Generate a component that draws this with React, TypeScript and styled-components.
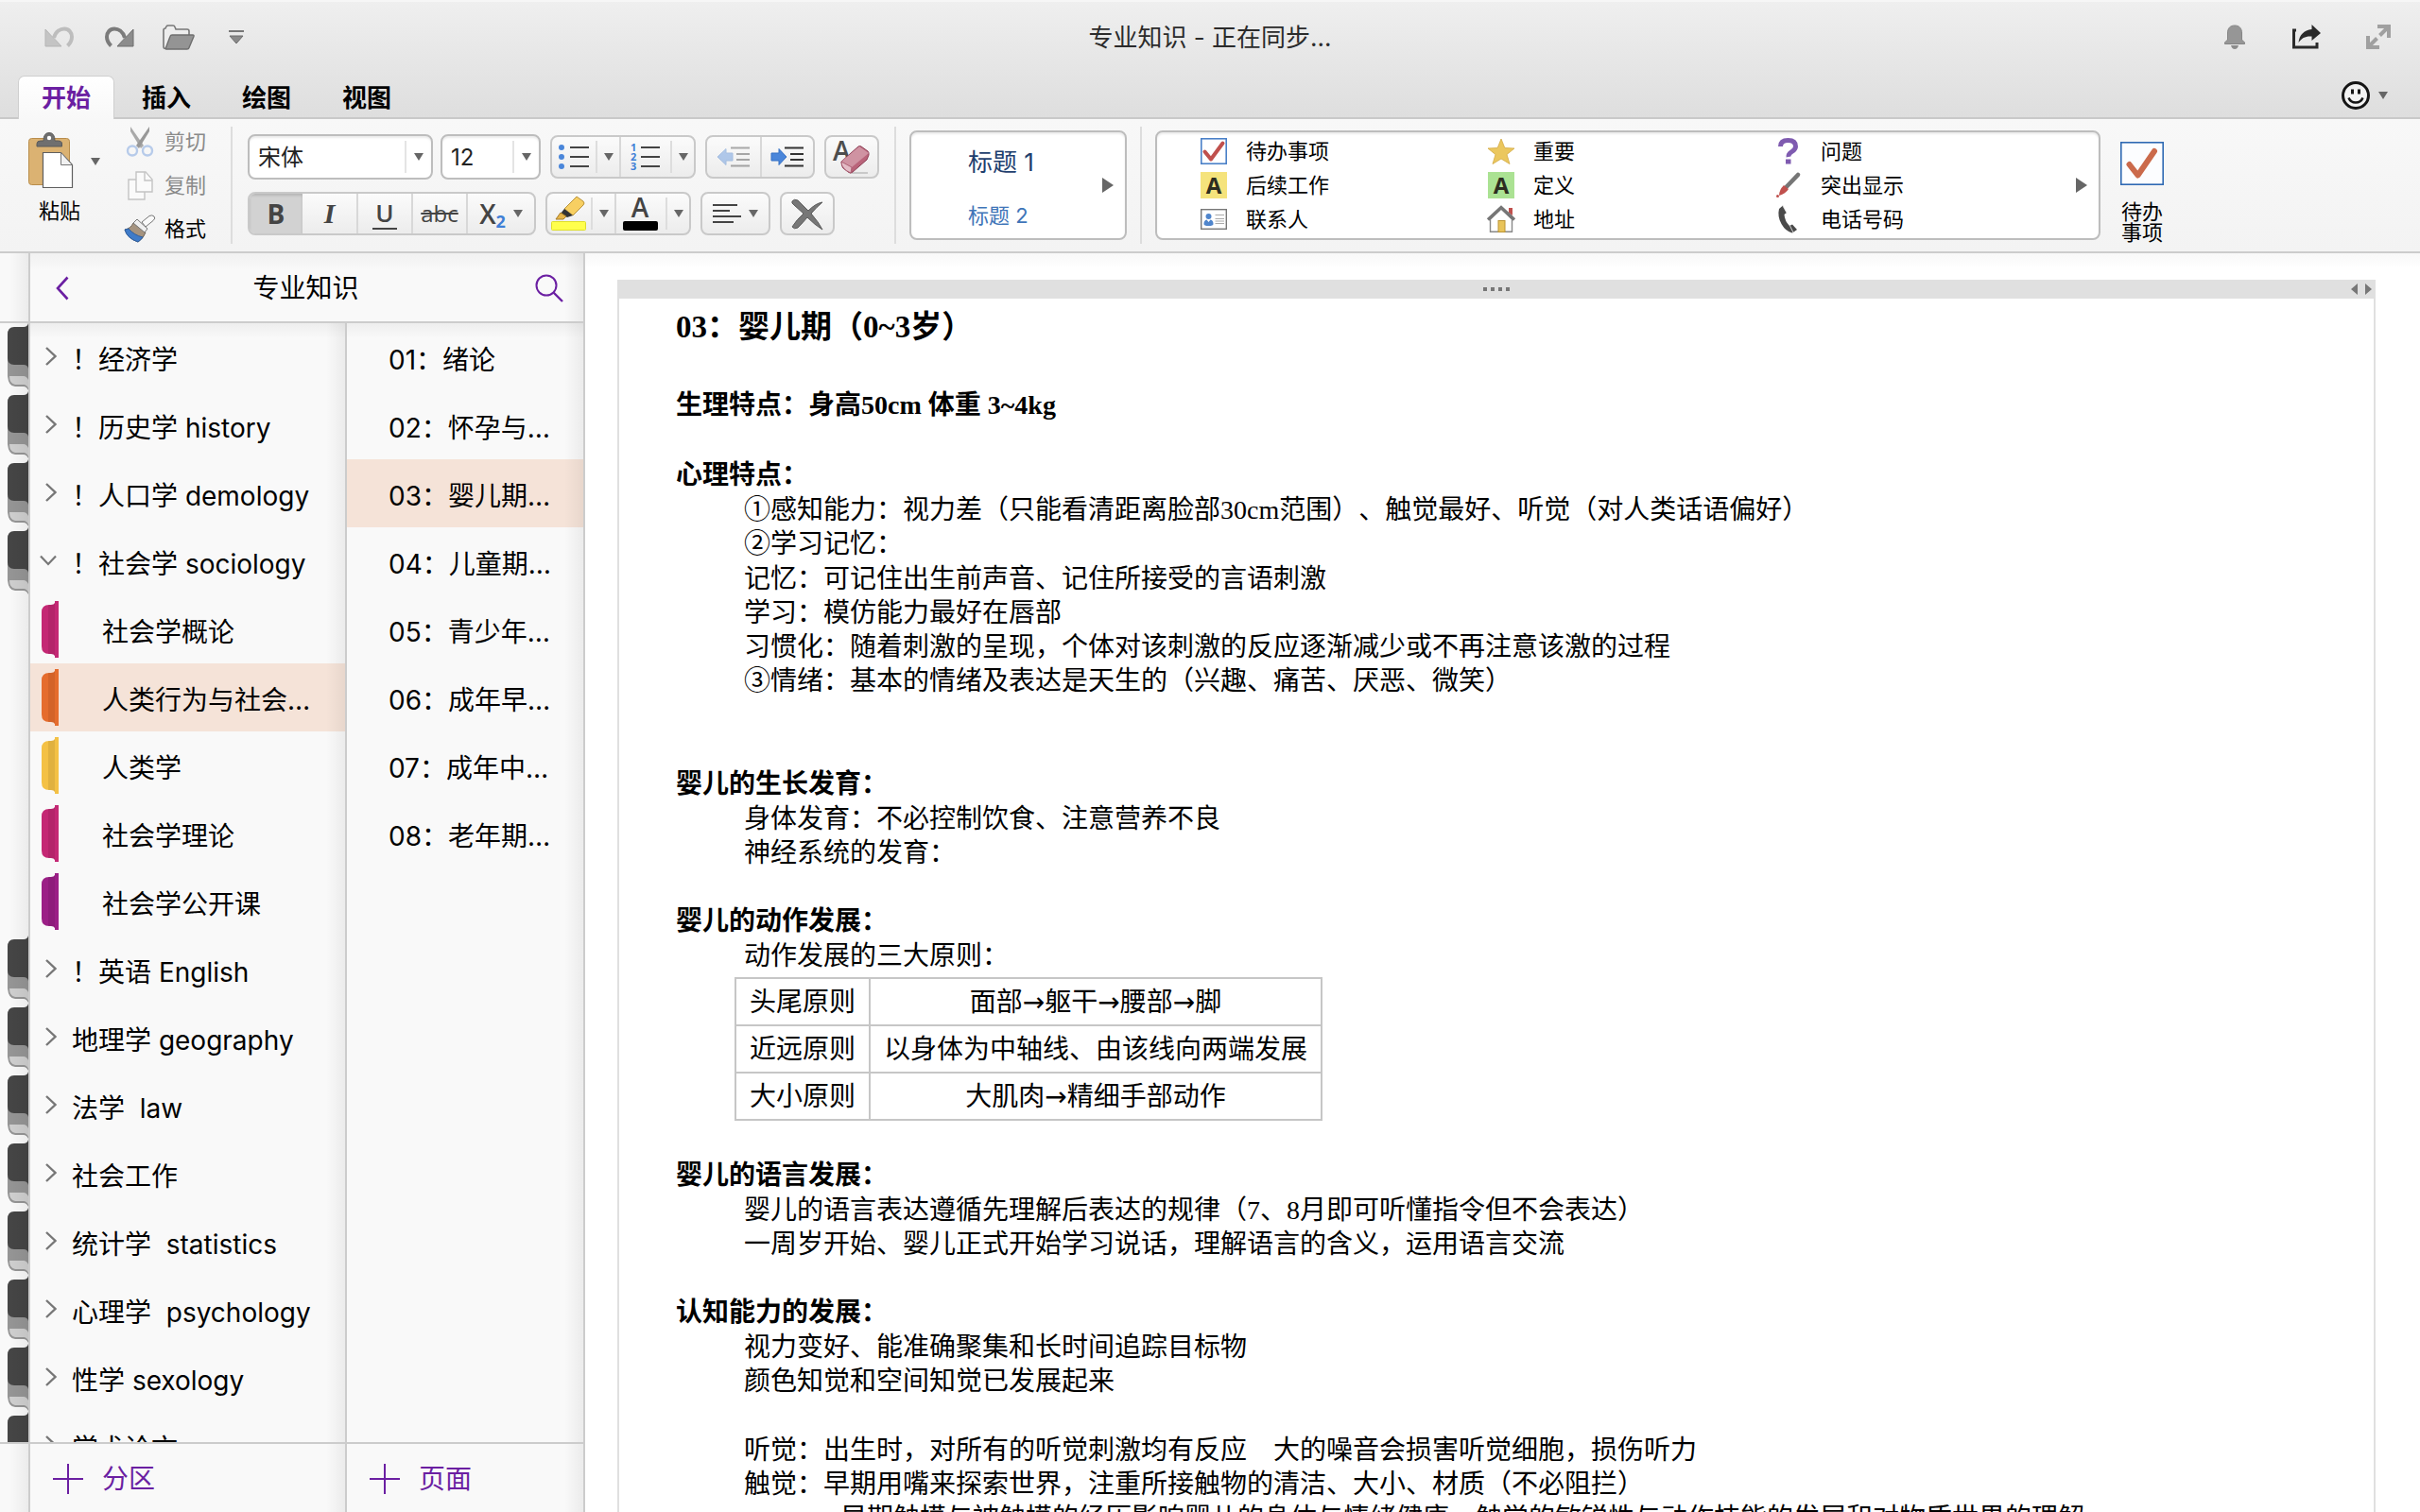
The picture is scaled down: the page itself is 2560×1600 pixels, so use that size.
import React from "react";
import styled, { createGlobalStyle, css } from "styled-components";

const UI_FONT = '"Inter", "Noto Sans CJK SC", sans-serif';
const NOTE_FONT = '"Liberation Serif", "Noto Sans CJK SC", serif';
const PURPLE = "#6b1fa2";
const LINE = "#cccccc";

const GlobalStyle = createGlobalStyle`
  *, *::before, *::after { box-sizing: border-box; }
  body { margin: 0; background: #fff; font-family: ${UI_FONT}; color: #000; text-spacing-trim: space-all; }
  button, select { font: inherit; color: inherit; }
  button { border: 0; padding: 0; background: none; cursor: pointer; }
  ul { list-style: none; margin: 0; padding: 0; }
  svg { display: block; flex: none; overflow: visible; }
`;

const Window = styled.div`
  display: flex;
  flex-direction: column;
  height: 100vh;
  overflow: hidden;
`;

/* ---------- title bar ---------- */

const Header = styled.header`
  flex: none;
  border-bottom: 2px solid #c9c9c9;
  background: linear-gradient(#efefef, #dedede);
  box-shadow: inset 0 2px 0 #f6f6f6;
`;

const TitleRow = styled.div`
  display: grid;
  grid-template-columns: 1fr auto 1fr;
  align-items: center;
  height: 78px;
`;

const Title = styled.h1`
  margin: 0;
  padding-top: 2px;
  font-size: 26px;
  line-height: 36px;
  font-weight: 400;
  color: #2b2b2b;
`;

const QuickBar = styled.div`
  display: flex;
  padding-left: 32px;
`;

const WindowTools = styled.div`
  display: flex;
  justify-content: flex-end;
  padding-right: 6px;
`;

const BarButton = styled.button<{ $width: number }>`
  display: flex;
  align-items: center;
  justify-content: center;
  width: ${(p) => p.$width}px;
  height: 40px;
`;

const TabRow = styled.div`
  display: flex;
  align-items: flex-end;
  justify-content: space-between;
  height: 46px;
  padding: 0 34px 0 20px;
`;

const Tabs = styled.div`
  display: flex;
  gap: 6px;
  margin-bottom: -2px;
`;

const Tab = styled.button<{ $active?: boolean }>`
  height: 45px;
  padding: 0 24px;
  border-radius: 6px 6px 0 0;
  font-size: 26px;
  line-height: 36px;
  font-weight: 600;
  ${(p) =>
    p.$active &&
    css`
      color: ${PURPLE};
      background: linear-gradient(#ffffff, #f8f8f8);
      box-shadow: 0 0 0 1px #cfcfcf;
      clip-path: inset(-2px -2px 0 -2px);
    `}
`;

const SmileButton = styled.button`
  display: flex;
  align-items: center;
  gap: 9px;
  height: 46px;
`;

/* ---------- ribbon ---------- */

const Ribbon = styled.section`
  flex: none;
  display: flex;
  height: 142px;
  padding-left: 30px;
  background: linear-gradient(#f8f8f8, #f3f3f3);
  border-bottom: 2px solid ${LINE};
`;

const Separator = styled.div`
  flex: none;
  width: 2px;
  margin: 8px 14px;
  background: #dddddd;
`;

const PasteButton = styled.button`
  display: flex;
  flex: none;
  flex-direction: column;
  align-items: center;
  gap: 8px;
  width: 66px;
  padding-top: 14px;
  font-size: 22px;
  line-height: 32px;

  svg { align-self: flex-start; }
`;

const CaretButton = styled.button`
  flex: none;
  align-self: flex-start;
  display: flex;
  align-items: center;
  justify-content: center;
  width: 10px;
  height: 90px;
`;

const ClipActions = styled.div`
  display: flex;
  flex: none;
  flex-direction: column;
  padding: 1px 12px 0 26px;
`;

const ClipAction = styled.button`
  display: flex;
  align-items: center;
  gap: 10px;
  height: 46px;
  font-size: 22px;
  line-height: 32px;

  &:disabled { color: #8a8a8a; }
`;

const FormatArea = styled.div`
  display: flex;
  flex: none;
  flex-direction: column;
  gap: 12px;
  padding: 16px 2px 0 2px;
`;

const FormatRow = styled.div`
  display: flex;
  align-items: center;
  gap: 10px;
  height: 48px;
`;

const ComboPair = styled.div`
  display: flex;
  gap: 8px;
`;

const Combo = styled.div<{ $width: number }>`
  display: flex;
  align-items: center;
  width: ${(p) => p.$width}px;
  height: 48px;
  border: 2px solid #bdbdbd;
  border-radius: 8px;
  background: #fff;
  box-shadow: inset 0 2px 2px #ececec;
`;

const ComboSelect = styled.select`
  flex: 1;
  min-width: 0;
  height: 44px;
  padding: 0 0 0 9px;
  border: 0;
  background: none;
  appearance: none;
  font-size: 24px;
  color: #222;
`;

const ComboCaret = styled.span`
  display: flex;
  align-items: center;
  justify-content: center;
  width: 28px;
  height: 34px;
  border-left: 2px solid #e4e4e4;
`;

const Group = styled.div`
  display: flex;
  height: 46px;
  border: 2px solid #c9c9c9;
  border-radius: 8px;
  overflow: hidden;
  background: linear-gradient(#fbfbfb, #ececec);
`;

const Segment = styled.button<{ $width: number; $active?: boolean; $divided?: boolean }>`
  display: flex;
  align-items: center;
  justify-content: center;
  gap: 8px;
  width: ${(p) => p.$width}px;
  height: 42px;
  border-left: ${(p) => (p.$divided ? "2px solid #d8d8d8" : "0")};
  background: ${(p) => (p.$active ? "#d2d2d2" : "none")};
  box-shadow: ${(p) => (p.$active ? "inset 0 2px 3px #b5b5b5" : "none")};
  color: #444;
  font-family: "Open Sans", sans-serif;
  font-size: 28px;
  line-height: 36px;
`;

const DropSegment = styled.button`
  display: flex;
  align-items: center;
  justify-content: center;
  align-self: center;
  width: 25px;
  height: 34px;
  border-left: 2px solid #dddddd;
`;

const Strong = styled.span` font-weight: 700; `;
const Slanted = styled.span`
  font-family: "Liberation Serif", serif;
  font-style: italic;
  font-weight: 700;
  font-size: 30px;
`;
const Underlined = styled.span`
  height: 34px;
  padding: 0 3px;
  line-height: 32px;
  font-size: 26px;
  font-weight: 600;
  border-bottom: 2px solid #444;
`;
const Struck = styled.span`
  font-size: 24px;
  text-decoration: line-through;
  text-decoration-thickness: 2px;
`;
const Script = styled.span`
  display: flex;
  align-items: flex-end;
  font-weight: 600;
  font-size: 28px;
  line-height: 38px;

  small {
    font-size: 18px;
    line-height: 22px;
    font-weight: 700;
    color: #3f7fd6;
  }
`;

const Gallery = styled.div`
  display: flex;
  flex: none;
  align-items: center;
  width: 230px;
  height: 116px;
  margin-top: 12px;
  padding-right: 12px;
  border: 2px solid #bdbdbd;
  border-radius: 8px;
  background: #fff;
  box-shadow: inset 0 2px 2px #ececec;
`;

const StyleList = styled.div`
  display: flex;
  flex: 1;
  flex-direction: column;
  align-items: flex-start;
  gap: 20px;
  padding: 8px 0 0 60px;
`;

const StyleChoice = styled.button<{ $size: number; $color: string }>`
  font-size: ${(p) => p.$size}px;
  line-height: 36px;
  color: ${(p) => p.$color};
`;

const TagGallery = styled(Gallery)`
  flex: 0 1 1000px;
`;

const TagGrid = styled.div`
  flex: 1;
  display: grid;
  grid-auto-flow: column;
  grid-template-rows: repeat(3, 36px);
  grid-template-columns: 304px 304px 1fr;
  padding-left: 46px;
`;

const Tag = styled.button`
  display: flex;
  align-items: center;
  gap: 20px;
  font-size: 22px;
  line-height: 32px;
`;

const TodoButton = styled.button`
  display: flex;
  flex: none;
  flex-direction: column;
  align-items: center;
  gap: 17px;
  width: 48px;
  margin-left: 20px;
  padding-top: 24px;
  font-size: 22px;
  line-height: 22px;
`;

/* ---------- notebook sidebar ---------- */

const Workspace = styled.main`
  flex: 1;
  display: flex;
  min-height: 0;
`;

const Sidebar = styled.aside`
  flex: none;
  display: grid;
  grid-template-columns: 32px 335px 252px;
  grid-template-rows: 74px minmax(0, 1fr) 74px;
  background: #f9f9f9;
`;

const edgeShade = css`
  position: relative;
  border-right: 2px solid ${LINE};

  &::after {
    content: "";
    position: absolute;
    inset: 0 0 0 auto;
    width: 20px;
    pointer-events: none;
    background: linear-gradient(to left, rgba(0, 0, 0, 0.055), rgba(0, 0, 0, 0));
  }
`;

const StripCell = styled.div<{ $edge?: "top" | "bottom" }>`
  ${edgeShade}
  overflow: hidden;
  border-bottom: ${(p) => (p.$edge === "top" ? `2px solid ${LINE}` : "0")};
  border-top: ${(p) => (p.$edge === "bottom" ? `2px solid ${LINE}` : "0")};
`;

const StripSlot = styled.div`
  height: 72px;
  padding-left: 8px;
`;

const NotebookHeader = styled.div`
  ${edgeShade}
  grid-column: 2 / 4;
  display: grid;
  grid-template-columns: 44px 1fr 44px;
  align-items: center;
  padding: 2px 14px 0 12px;
  border-bottom: 2px solid ${LINE};
  background: linear-gradient(#f1f1f1, #f9f9f9 18px);
`;

const NotebookTitle = styled.h2`
  margin: 0;
  text-align: center;
  font-size: 28px;
  line-height: 40px;
  font-weight: 400;
`;

const HeaderButton = styled.button`
  display: flex;
  align-items: center;
  justify-content: center;
  height: 60px;
`;

const ListCell = styled.nav`
  ${edgeShade}
  overflow: hidden;
  background: linear-gradient(#eeeeee, #f9f9f9 16px);
`;

const rowBase = css<{ $selected?: boolean }>`
  display: flex;
  align-items: center;
  width: 100%;
  height: 72px;
  padding-top: 6px;
  text-align: left;
  white-space: pre;
  font-size: 28px;
  line-height: 40px;
  background: ${(p) => (p.$selected ? "#f5e3d8" : "none")};
`;

const SectionRow = styled.button<{ $selected?: boolean }>`
  ${rowBase}
`;

const PageRow = styled.button<{ $selected?: boolean }>`
  ${rowBase}
  padding-left: 44px;
`;

const Marker = styled.span`
  flex: none;
  display: flex;
  justify-content: flex-end;
  width: 28px;
  margin-right: 16px;
  padding-bottom: 8px;
`;

const ColorMarker = styled.span`
  flex: none;
  width: 76px;
  padding: 0 0 6px 12px;
`;

const AddCell = styled.div`
  ${edgeShade}
  border-top: 2px solid ${LINE};
`;

const AddButton = styled.button`
  display: flex;
  align-items: center;
  gap: 20px;
  width: 100%;
  height: 72px;
  padding: 2px 0 0 24px;
  font-size: 28px;
  line-height: 40px;
  color: ${PURPLE};
`;

/* ---------- note ---------- */

const Canvas = styled.div`
  flex: 1;
  min-width: 0;
  overflow: hidden;
  padding: 28px 47px 0 34px;
  background: linear-gradient(#f8f8f8, #ffffff 16px);
`;

const NoteBox = styled.article`
  min-height: 100%;
  border: 2px solid #e0e0e0;
  border-top: 0;
`;

const NoteHandle = styled.div`
  display: grid;
  grid-template-columns: 1fr auto 1fr;
  align-items: center;
  height: 20px;
  margin: 0 -2px;
  padding: 0 4px;
  background: #e0e0e0;

  svg:last-child { justify-self: end; }
`;

const NoteBody = styled.div`
  padding: 8px 0 0 60px;
  font-family: ${NOTE_FONT};
  font-size: 28px;
  line-height: 36px;
  white-space: pre;
`;

const NoteTitle = styled.h2`
  margin: 0 0 43px;
  font-size: 33px;
  line-height: 44px;
  font-weight: 700;
`;

const NoteSection = styled.section<{ $gap: number }>`
  margin-bottom: ${(p) => p.$gap}px;
`;

const NoteHeading = styled.h3`
  margin: 0;
  font-size: 28px;
  line-height: 36px;
  font-weight: 700;
`;

const NoteLines = styled.div`
  padding: 1px 0 0 72px;
`;

const NoteLine = styled.p<{ $indent?: boolean }>`
  margin: 0;
  padding-left: ${(p) => (p.$indent ? "102px" : "0")};
`;

const NoteTable = styled.table`
  margin: 4px 0 0 62px;
  border-collapse: collapse;

  td {
    height: 50px;
    padding: 2px 14px 0;
    border: 2px solid #c6c6c6;
    text-align: center;
  }
`;

const Arrow = styled.span`
  font-family: "DejaVu Sans", sans-serif;
  line-height: 1;
`;

/* ---------- drawings ---------- */

const Caret = ({ color = "#666" }: { color?: string }) => (
  <svg width="10" height="8" viewBox="0 0 10 8" aria-hidden="true">
    <path d="M0 0H10L5 8Z" fill={color} />
  </svg>
);

const MoreArrow = () => (
  <svg width="12" height="16" viewBox="0 0 12 16" aria-hidden="true">
    <path d="M0 0 12 8 0 16Z" fill="#666" />
  </svg>
);

const TurnIcon = ({ redo }: { redo?: boolean }) => (
  <svg width="30" height="22" viewBox="0 0 30 22" aria-hidden="true">
    <g transform={redo ? "matrix(-1 0 0 1 30 0)" : undefined}>
      <path d="M0 3V21H17L11 14.500L5.500 9Z" fill={redo ? "#8c8c8c" : "#c4c4c4"} stroke={redo ? "#6f6f6f" : "#b5b5b5"} />
      <path d="M9 12C11 5 16 2.500 20 2.500C25 2.500 28 6.500 28 11C28 15 26.500 17.500 23.500 20.500" fill="none" stroke={redo ? "#7b7b7b" : "#bdbdbd"} strokeWidth="4" />
    </g>
  </svg>
);

const FolderIcon = () => (
  <svg width="34" height="27" viewBox="0 0 34 27" aria-hidden="true">
    <path d="M4 25.500H3Q1 25.500 1 23V6Q1 4 3 4L4 2Q4.500 1 6 1H11Q12.500 1 13 2.500L14 5H26Q28 5 28 7V11" fill="#ededed" stroke="#777" strokeWidth="1.600" />
    <path d="M10 11H32Q33.500 11 33 12.500L28 24.500Q27.500 26 26 26H4Q3 26 3.500 24.500L8 12.500Q8.500 11 10 11Z" fill="#949494" stroke="#6e6e6e" strokeWidth="1.400" />
  </svg>
);

const CustomizeIcon = () => (
  <svg width="16" height="14" viewBox="0 0 16 14" aria-hidden="true">
    <path d="M0 0H16V2H0Z" fill="#777" />
    <path d="M1 6H15L8 14Z" fill="#8a8a8a" stroke="#6d6d6d" />
  </svg>
);

const BellIcon = () => (
  <svg width="24" height="26" viewBox="0 0 24 26" aria-hidden="true">
    <path d="M12 1C17 1 19.500 4 19.500 9V16L22.500 19V20.500H1.500V19L4.500 16V9C4.500 4 7 1 12 1Z" fill="#969696" stroke="#858585" />
    <path d="M8 22H16Q15 26 12 26T8 22Z" fill="#8c8c8c" />
  </svg>
);

const ShareIcon = () => (
  <svg width="30" height="26" viewBox="0 0 30 26" aria-hidden="true">
    <path d="M4 6H1.500V24H26V19" fill="none" stroke="#2a2a2a" strokeWidth="3" />
    <path d="M20.500 0 30 9 20.500 17V12.500C14 12 10 14 6.500 19C7.500 11 12 6 20.500 5Z" fill="#2a2a2a" />
  </svg>
);

const ExpandIcon = () => (
  <svg width="26" height="26" viewBox="0 0 26 26" aria-hidden="true">
    <g fill="none" stroke="#a0a0a0" strokeWidth="4">
      <path d="M12 2H24V14M23 3 14.500 11.500" />
      <path d="M2 12V24H14M3 23 11.500 14.500" />
    </g>
  </svg>
);

const SmileIcon = () => (
  <svg width="30" height="30" viewBox="0 0 30 30" aria-hidden="true">
    <circle cx="15" cy="15" r="13.500" fill="#f2f2f2" stroke="#151515" strokeWidth="3" />
    <path d="M11.500 8.500V13.500M18.500 8.500V13.500" stroke="#151515" strokeWidth="3" />
    <path d="M7.500 17.500Q9.500 22.500 15 22.500T22.500 17.500" fill="none" stroke="#151515" strokeWidth="2.500" />
  </svg>
);

const ClipboardIcon = () => (
  <svg width="48" height="59" viewBox="0 0 48 59" aria-hidden="true">
    <rect x="0.500" y="6.500" width="43" height="49" rx="3" fill="#dbb272" stroke="#b98d4b" />
    <path d="M9 15V12Q9 9 13 9H16Q16 0.500 22 0.500T28 9H31Q35.500 9 35.500 12V15Z" fill="#6f6f6f" stroke="#5a5a5a" />
    <circle cx="22" cy="6" r="2.200" fill="#fff" />
    <path d="M15.500 21.500H34.500L46.500 34.500V58.500H15.500Z" fill="#fff" stroke="#5f5f5f" strokeWidth="1.200" />
    <path d="M34.500 21.500V34.500H46.500Z" fill="#f1f1f1" stroke="#777" />
  </svg>
);

const ScissorsIcon = () => (
  <svg width="32" height="32" viewBox="0 0 32 32" aria-hidden="true">
    <path d="M6 0 20 20 17 23 6 5Z" fill="#a9a9a9" />
    <path d="M26 0 12 20 15 23 26 5Z" fill="#989898" />
    <circle cx="8" cy="25.500" r="5" fill="none" stroke="#b7cbea" strokeWidth="2.400" />
    <circle cx="24" cy="25.500" r="5" fill="none" stroke="#b7cbea" strokeWidth="2.400" />
  </svg>
);

const CopyIcon = () => (
  <svg width="32" height="32" viewBox="0 0 32 32" aria-hidden="true">
    <g fill="#fafafa" stroke="#c3c3c3" strokeWidth="1.400">
      <path d="M4 10H15L21 16V31H4Z" />
      <path d="M12 2H22L29 10V23H12Z" />
      <path d="M21 2V11H29" />
    </g>
  </svg>
);

const BrushIcon = () => (
  <svg width="32" height="30" viewBox="0 0 32 30" aria-hidden="true">
    <path d="M0 16Q6 15 9 9L22 19Q20 25 14 29Q4 26 0 16Z" fill="#a5937f" stroke="#6b6258" />
    <path d="M0 16Q2 25 14 29Q17 27 19 24Q10 22 4 15Z" fill="#3f7bc8" stroke="#2e5e9f" />
    <path d="M9 9 13 5 24 15 21 19Z" fill="#f0f0f0" stroke="#777" />
    <path d="M18 8 26 1.500Q29 0 31 2T30 6.500L22 13Z" fill="#fafafa" stroke="#777" />
  </svg>
);

const BulletIcon = () => (
  <svg width="32" height="28" viewBox="0 0 32 28" aria-hidden="true">
    {[4, 14, 24].map((y) => (
      <g key={y}>
        <circle cx="3" cy={y} r="3" fill="#4a86da" />
        <path d={`M12 ${y}H32`} stroke="#444" strokeWidth="2" />
      </g>
    ))}
  </svg>
);

const NumberIcon = () => (
  <svg width="32" height="30" viewBox="0 0 32 30" aria-hidden="true">
    {[5, 15, 25].map((y, i) => (
      <g key={y}>
        <text x="0" y={y + 4} fontFamily="Open Sans, sans-serif" fontWeight="700" fontSize="11" fill="#3f7fd6">
          {i + 1}
        </text>
        <path d={`M11 ${y}H31`} stroke="#444" strokeWidth="2" />
      </g>
    ))}
  </svg>
);

const IndentIcon = ({ out }: { out?: boolean }) => (
  <svg width="34" height="22" viewBox="0 0 34 22" aria-hidden="true" opacity={out ? 0.4 : 1}>
    <path d="M14 1.500H34M20 8H34M20 14H34M14 20.500H34" stroke="#333" strokeWidth="2" />
    <path
      d={out ? "M0 11 9 2.500V7H16V15H9V19.500Z" : "M16 11 8 2.500V7H0V15H8V19.500Z"}
      fill="#4a86da"
      stroke="#3570c4"
    />
  </svg>
);

const EraserIcon = () => (
  <svg width="40" height="38" viewBox="0 0 40 38" aria-hidden="true">
    <text x="0" y="23" fontFamily="Open Sans, sans-serif" fontWeight="600" fontSize="28" fill="#4d4d4d">A</text>
    <path d="M20 36H37" stroke="#c9c9c9" strokeWidth="2" />
    <path d="M9 24 27 8Q28.500 7 30 8L37 13Q38.500 14.500 38 17L36 22 21 35Q19 37 17 35.500L11 31Q9 29 9 24Z" fill="#b9647a" stroke="#8c3f55" />
    <path d="M9 24 28 8 38 15 20 30Z" fill="#cf93a2" />
    <path d="M9 24 20 30 19 36Q9 32 9 24Z" fill="#e3bcc6" stroke="#a5566b" strokeWidth="0.800" />
  </svg>
);

const HighlightIcon = () => (
  <svg width="38" height="38" viewBox="0 0 38 38" aria-hidden="true">
    <path d="M27 1 34 6Q36 8 34 10L23 21 14 14Z" fill="#f7cf62" stroke="#b8923a" />
    <path d="M14 14 23 21 17 23 10 19Z" fill="#333" />
    <path d="M10 18 16 22 13 25H5Z" fill="#e8b64a" stroke="#a67c27" />
    <rect x="0.500" y="27.500" width="36" height="9" rx="1" fill="#ffff4d" stroke="#dede2c" />
  </svg>
);

const FontColorIcon = () => (
  <svg width="38" height="38" viewBox="0 0 38 38" aria-hidden="true">
    <text x="18" y="23" textAnchor="middle" fontFamily="Open Sans, sans-serif" fontWeight="600" fontSize="28" fill="#444">A</text>
    <rect x="0" y="27" width="37" height="10" rx="2" fill="#000" />
  </svg>
);

const AlignIcon = () => (
  <svg width="30" height="20" viewBox="0 0 30 20" aria-hidden="true">
    <path d="M0 1H26M0 7H18M0 13H30M0 19H22" stroke="#444" strokeWidth="2" />
  </svg>
);

const DeleteIcon = () => (
  <svg width="34" height="33" viewBox="0 0 34 33" aria-hidden="true">
    <path d="M1 3Q3 0 7 2L18 13Q26 5 33 4Q27 9 21 16Q29 25 33 33Q25 28 17 20Q12 26 7 31Q3 33 1 30Q6 22 13 16L3 7Q0 5 1 3Z" fill="#777" stroke="#5c5c5c" />
  </svg>
);

const CheckTag = () => (
  <svg width="28" height="28" viewBox="0 0 28 28" aria-hidden="true">
    <rect x="0.800" y="0.800" width="26.400" height="26.400" fill="#fff" stroke="#4a80c8" strokeWidth="1.600" />
    <path d="M4.500 14.500 11 22.500 23.500 5.500" fill="none" stroke="#c0504d" strokeWidth="4" strokeLinecap="round" strokeLinejoin="round" />
  </svg>
);

const LetterTag = ({ color }: { color: string }) => (
  <svg width="28" height="28" viewBox="0 0 28 28" aria-hidden="true">
    <rect width="28" height="28" fill={color} />
    <text x="14" y="22.500" textAnchor="middle" fontFamily="Open Sans, sans-serif" fontWeight="700" fontSize="24" fill="#2d2d20">A</text>
  </svg>
);

const ContactTag = () => (
  <svg width="28" height="28" viewBox="0 0 28 28" aria-hidden="true">
    <rect x="0.700" y="3.700" width="26.600" height="20.600" fill="#fff" stroke="#777" strokeWidth="1.400" />
    <circle cx="8.500" cy="11" r="3" fill="#4f85cc" />
    <path d="M3.500 19Q3.500 15 6.500 14.500L8.500 17 10.500 14.500Q13.500 15 13.500 19 13.500 21 8.500 21T3.500 19Z" fill="#4f85cc" />
    <path d="M15.500 9.500H25M15.500 13.500H25M15.500 16H25M15.500 18.500H25" stroke="#aaa" />
  </svg>
);

const StarTag = () => (
  <svg width="28" height="28" viewBox="0 0 28 28" aria-hidden="true">
    <path d="M14 1 17.800 10.500 28 11 20 17.500 23 27.500 14 22 5 27.500 8 17.500 0 11 10.200 10.500Z" fill="#ebc75e" stroke="#d3aa42" strokeWidth="0.800" />
  </svg>
);

const HouseTag = () => (
  <svg width="28" height="28" viewBox="0 0 28 28" aria-hidden="true">
    <path d="M22 2H26V10L22 7Z" fill="#c0504d" />
    <path d="M2.500 14 14 3 25.500 14V27.300H2.500Z" fill="#fff" stroke="#888" strokeWidth="1.400" />
    <path d="M0 14.500 14 1.500 28 14.500" fill="none" stroke="#767676" strokeWidth="3.400" />
    <rect x="11" y="15.500" width="7" height="12" fill="#e9c45a" stroke="#bb9433" />
  </svg>
);

const QuestionTag = () => (
  <svg width="28" height="28" viewBox="0 0 28 28" aria-hidden="true">
    <path d="M5.500 9Q5.500 2.500 13.500 2.500T21.500 9Q21.500 12 17.500 14.500T14 20" fill="none" stroke="#7f5bb0" strokeWidth="5" />
    <rect x="11" y="22.500" width="5.500" height="5" fill="#7f5bb0" />
  </svg>
);

const PenTag = () => (
  <svg width="28" height="28" viewBox="0 0 28 28" aria-hidden="true">
    <path d="M24 3 12 15.500" stroke="#767676" strokeWidth="4.600" strokeLinecap="round" />
    <path d="M9 14 14 18Q11 23 4 25Q4 19 9 14Z" fill="#c0504d" />
    <circle cx="2.500" cy="25.500" r="1.500" fill="#c0504d" />
  </svg>
);

const PhoneTag = () => (
  <svg width="28" height="30" viewBox="0 0 28 30" aria-hidden="true">
    <path d="M4 4 8 0.500 12 8 9.500 10Q10 17 15 22L18 20.500 23 26 18 29.500Q11 28 6.500 20T4 4Z" fill="#4a4a4a" />
    <path d="M8 1 12 8M15.500 22 19 29" stroke="#fff" strokeWidth="0.800" />
  </svg>
);

const TodoIcon = () => (
  <svg width="46" height="46" viewBox="0 0 46 46" aria-hidden="true">
    <rect x="0.800" y="0.800" width="44.400" height="44.400" fill="#fcfdff" stroke="#2f69b3" strokeWidth="1.600" />
    <path d="M9.500 24 18.500 35.500 36 10" fill="none" stroke="#cb6a4b" strokeWidth="6" strokeLinecap="round" strokeLinejoin="round" />
  </svg>
);

const BackIcon = () => (
  <svg width="14" height="26" viewBox="0 0 14 26" aria-hidden="true">
    <path d="M12.500 1.500 2 13 12.500 24.500" fill="none" stroke={PURPLE} strokeWidth="2.600" />
  </svg>
);

const SearchIcon = () => (
  <svg width="30" height="30" viewBox="0 0 30 30" aria-hidden="true">
    <circle cx="12" cy="12" r="10.500" fill="none" stroke={PURPLE} strokeWidth="2" />
    <path d="M19.500 19.500 29 29" stroke={PURPLE} strokeWidth="2.400" />
  </svg>
);

const Chevron = ({ open }: { open?: boolean }) =>
  open ? (
    <svg width="18" height="12" viewBox="0 0 18 12" aria-hidden="true">
      <path d="M1 1.500 9 10 17 1.500" fill="none" stroke="#777" strokeWidth="2.200" />
    </svg>
  ) : (
    <svg width="12" height="20" viewBox="0 0 12 20" aria-hidden="true">
      <path d="M1 1 10.500 10 1 19" fill="none" stroke="#777" strokeWidth="2.400" />
    </svg>
  );

const StackIcon = () => (
  <svg width="22" height="72" viewBox="0 0 22 72" aria-hidden="true">
    <path d="M0 30V56Q1 67 8 67H17Q20 67 22 71V42Z" fill="#959595" />
    <path d="M2 56H17Q20 56 22 60V69Q20 65 17 65H8Q2 64 2 56Z" fill="#cfcfcf" />
    <path d="M22 0Q21 4 17 4H7Q0 4 0 12V37Q0 44 7 44H17Q21 44 22 48Z" fill="#454545" />
  </svg>
);

const ColorTab = ({ color }: { color: string }) => (
  <svg width="18" height="60" viewBox="0 0 18 60" aria-hidden="true">
    <path d="M14 2Q13 4 10 4H8Q0 4 0 12V48Q0 56 8 56H10Q13 56 14 58V60H18V0H14Z" fill={color} />
    <path d="M7 4H10Q13 4 14 2V58Q13 56 10 56H7Z" fill="#000" opacity="0.080" />
  </svg>
);

const PlusIcon = () => (
  <svg width="32" height="32" viewBox="0 0 32 32" aria-hidden="true">
    <path d="M16 0V32M0 16H32" stroke={PURPLE} strokeWidth="2" />
  </svg>
);

const HandleDots = () => (
  <svg width="28" height="4" viewBox="0 0 28 4" aria-hidden="true">
    <path d="M0 0H4V4H0ZM8 0H12V4H8ZM16 0H20V4H16ZM24 0H28V4H24Z" fill="#777" />
  </svg>
);

const ResizeArrows = () => (
  <svg width="22" height="12" viewBox="0 0 22 12" aria-hidden="true">
    <path d="M7 0V12L0 6ZM15 0V12L22 6Z" fill="#777" />
  </svg>
);

/* ---------- data ---------- */

const sections: { name: string; color?: string; open?: boolean; selected?: boolean }[] = [
  { name: "！经济学" },
  { name: "！历史学 history" },
  { name: "！人口学 demology" },
  { name: "！社会学 sociology", open: true },
  { name: "社会学概论", color: "#c42874" },
  { name: "人类行为与社会…", color: "#e56c2d", selected: true },
  { name: "人类学", color: "#f4c145" },
  { name: "社会学理论", color: "#c42874" },
  { name: "社会学公开课", color: "#9b1f86" },
  { name: "！英语 English" },
  { name: "地理学 geography" },
  { name: "法学  law" },
  { name: "社会工作" },
  { name: "统计学  statistics" },
  { name: "心理学  psychology" },
  { name: "性学 sexology" },
  { name: "学术论文" },
];

const pages = [
  "01：绪论",
  "02：怀孕与…",
  "03：婴儿期…",
  "04：儿童期…",
  "05：青少年…",
  "06：成年早…",
  "07：成年中…",
  "08：老年期…",
];

const tags: [string, React.ReactNode][] = [
  ["待办事项", <CheckTag />],
  ["后续工作", <LetterTag color="#f5e37c" />],
  ["联系人", <ContactTag />],
  ["重要", <StarTag />],
  ["定义", <LetterTag color="#abe293" />],
  ["地址", <HouseTag />],
  ["问题", <QuestionTag />],
  ["突出显示", <PenTag />],
  ["电话号码", <PhoneTag />],
];

const principles: [string, string[]][] = [
  ["头尾原则", ["面部", "躯干", "腰部", "脚"]],
  ["近远原则", ["以身体为中轴线、由该线向两端发展"]],
  ["大小原则", ["大肌肉", "精细手部动作"]],
];

/* ---------- page ---------- */

const Drop = ({ label }: { label: string }) => (
  <DropSegment aria-label={label}>
    <Caret />
  </DropSegment>
);

const Steps = ({ steps }: { steps: string[] }) => (
  <>
    {steps.map((step, i) => (
      <React.Fragment key={step}>
        {i > 0 && <Arrow>→</Arrow>}
        {step}
      </React.Fragment>
    ))}
  </>
);

export default function App() {
  return (
    <Window>
      <GlobalStyle />
      <Header>
        <TitleRow>
          <QuickBar>
            <BarButton $width={62} aria-label="撤销" disabled><TurnIcon /></BarButton>
            <BarButton $width={64} aria-label="重做"><TurnIcon redo /></BarButton>
            <BarButton $width={62} aria-label="打开"><FolderIcon /></BarButton>
            <BarButton $width={60} aria-label="自定义"><CustomizeIcon /></BarButton>
          </QuickBar>
          <Title>专业知识 - 正在同步...</Title>
          <WindowTools>
            <BarButton $width={76} aria-label="通知"><BellIcon /></BarButton>
            <BarButton $width={76} aria-label="共享"><ShareIcon /></BarButton>
            <BarButton $width={76} aria-label="全屏"><ExpandIcon /></BarButton>
          </WindowTools>
        </TitleRow>
        <TabRow>
          <Tabs role="tablist">
            <Tab role="tab" aria-selected $active>开始</Tab>
            <Tab role="tab">插入</Tab>
            <Tab role="tab">绘图</Tab>
            <Tab role="tab">视图</Tab>
          </Tabs>
          <SmileButton aria-label="反馈"><SmileIcon /><Caret /></SmileButton>
        </TabRow>
      </Header>

      <Ribbon>
        <PasteButton><ClipboardIcon />粘贴</PasteButton>
        <CaretButton aria-label="粘贴选项"><Caret /></CaretButton>
        <ClipActions>
          <ClipAction disabled><ScissorsIcon />剪切</ClipAction>
          <ClipAction disabled><CopyIcon />复制</ClipAction>
          <ClipAction><BrushIcon />格式</ClipAction>
        </ClipActions>
        <Separator />
        <FormatArea>
          <FormatRow>
            <ComboPair>
              <Combo $width={196}>
                <ComboSelect aria-label="字体" defaultValue="宋体"><option>宋体</option></ComboSelect>
                <ComboCaret><Caret /></ComboCaret>
              </Combo>
              <Combo $width={106}>
                <ComboSelect aria-label="字号" defaultValue="12"><option>12</option></ComboSelect>
                <ComboCaret><Caret /></ComboCaret>
              </Combo>
            </ComboPair>
            <Group>
              <Segment $width={46} aria-label="项目符号"><BulletIcon /></Segment>
              <Drop label="项目符号选项" />
              <Segment $width={54} $divided aria-label="编号"><NumberIcon /></Segment>
              <Drop label="编号选项" />
            </Group>
            <Group>
              <Segment $width={56} aria-label="减少缩进" disabled><IndentIcon out /></Segment>
              <Segment $width={56} $divided aria-label="增加缩进"><IndentIcon /></Segment>
            </Group>
            <Group>
              <Segment $width={54} aria-label="清除格式"><EraserIcon /></Segment>
            </Group>
          </FormatRow>
          <FormatRow>
            <Group>
              <Segment $width={56} $active aria-label="加粗"><Strong>B</Strong></Segment>
              <Segment $width={57} aria-label="倾斜"><Slanted>I</Slanted></Segment>
              <Segment $width={58} $divided aria-label="下划线"><Underlined>U</Underlined></Segment>
              <Segment $width={58} $divided aria-label="删除线"><Struck>abc</Struck></Segment>
              <Segment $width={72} $divided aria-label="下标"><Script>X<small>2</small></Script><Caret /></Segment>
            </Group>
            <Group>
              <Segment $width={46} aria-label="突出显示颜色"><HighlightIcon /></Segment>
              <Drop label="突出显示选项" />
              <Segment $width={54} $divided aria-label="字体颜色"><FontColorIcon /></Segment>
              <Drop label="字体颜色选项" />
            </Group>
            <Group>
              <Segment $width={70} aria-label="对齐"><AlignIcon /><Caret /></Segment>
            </Group>
            <Group>
              <Segment $width={54} aria-label="删除"><DeleteIcon /></Segment>
            </Group>
          </FormatRow>
        </FormatArea>
        <Separator />
        <Gallery>
          <StyleList>
            <StyleChoice $size={26} $color="#1f3f6e">标题 1</StyleChoice>
            <StyleChoice $size={22} $color="#3f75b8">标题 2</StyleChoice>
          </StyleList>
          <MoreArrow />
        </Gallery>
        <Separator />
        <TagGallery>
          <TagGrid>
            {tags.map(([name, icon]) => (
              <Tag key={name}>{icon}{name}</Tag>
            ))}
          </TagGrid>
          <MoreArrow />
        </TagGallery>
        <TodoButton><TodoIcon /><span>待办<br />事项</span></TodoButton>
      </Ribbon>

      <Workspace>
        <Sidebar>
          <StripCell $edge="top" />
          <NotebookHeader>
            <HeaderButton aria-label="返回"><BackIcon /></HeaderButton>
            <NotebookTitle>专业知识</NotebookTitle>
            <HeaderButton aria-label="搜索"><SearchIcon /></HeaderButton>
          </NotebookHeader>

          <StripCell>
            {sections.map((s) => (
              <StripSlot key={s.name}>{!s.color && <StackIcon />}</StripSlot>
            ))}
          </StripCell>
          <ListCell aria-label="分区">
            <ul>
              {sections.map((s) => (
                <li key={s.name}>
                  <SectionRow $selected={s.selected}>
                    {s.color ? (
                      <ColorMarker><ColorTab color={s.color} /></ColorMarker>
                    ) : (
                      <Marker><Chevron open={s.open} /></Marker>
                    )}
                    {s.name}
                  </SectionRow>
                </li>
              ))}
            </ul>
          </ListCell>
          <ListCell aria-label="页面">
            <ul>
              {pages.map((name, i) => (
                <li key={name}><PageRow $selected={i === 2}>{name}</PageRow></li>
              ))}
            </ul>
          </ListCell>

          <StripCell $edge="bottom" />
          <AddCell><AddButton><PlusIcon />分区</AddButton></AddCell>
          <AddCell><AddButton><PlusIcon />页面</AddButton></AddCell>
        </Sidebar>

        <Canvas>
          <NoteBox>
            <NoteHandle><span /><HandleDots /><ResizeArrows /></NoteHandle>
            <NoteBody>
              <NoteTitle>03：婴儿期（0~3岁）</NoteTitle>
              <NoteSection $gap={38}>
                <NoteHeading>生理特点：身高50cm 体重 3~4kg</NoteHeading>
              </NoteSection>
              <NoteSection $gap={73}>
                <NoteHeading>心理特点：</NoteHeading>
                <NoteLines>
                  <NoteLine>①感知能力：视力差（只能看清距离脸部30cm范围）、触觉最好、听觉（对人类话语偏好）</NoteLine>
                  <NoteLine>②学习记忆：</NoteLine>
                </NoteLines>
                <NoteLines>
                  <NoteLine>记忆：可记住出生前声音、记住所接受的言语刺激</NoteLine>
                  <NoteLine>学习：模仿能力最好在唇部</NoteLine>
                  <NoteLine>习惯化：随着刺激的呈现，个体对该刺激的反应逐渐减少或不再注意该激的过程</NoteLine>
                  <NoteLine>③情绪：基本的情绪及表达是天生的（兴趣、痛苦、厌恶、微笑）</NoteLine>
                </NoteLines>
              </NoteSection>
              <NoteSection $gap={36}>
                <NoteHeading>婴儿的生长发育：</NoteHeading>
                <NoteLines>
                  <NoteLine>身体发育：不必控制饮食、注意营养不良</NoteLine>
                  <NoteLine>神经系统的发育：</NoteLine>
                </NoteLines>
              </NoteSection>
              <NoteSection $gap={40}>
                <NoteHeading>婴儿的动作发展：</NoteHeading>
                <NoteLines>
                  <NoteLine>动作发展的三大原则：</NoteLine>
                </NoteLines>
                <NoteTable>
                  <tbody>
                    {principles.map(([name, steps]) => (
                      <tr key={name}><td>{name}</td><td><Steps steps={steps} /></td></tr>
                    ))}
                  </tbody>
                </NoteTable>
              </NoteSection>
              <NoteSection $gap={36}>
                <NoteHeading>婴儿的语言发展：</NoteHeading>
                <NoteLines>
                  <NoteLine>婴儿的语言表达遵循先理解后表达的规律（7、8月即可听懂指令但不会表达）</NoteLine>
                  <NoteLine>一周岁开始、婴儿正式开始学习说话，理解语言的含义，运用语言交流</NoteLine>
                </NoteLines>
              </NoteSection>
              <NoteSection $gap={36}>
                <NoteHeading>认知能力的发展：</NoteHeading>
                <NoteLines>
                  <NoteLine>视力变好、能准确聚集和长时间追踪目标物</NoteLine>
                  <NoteLine>颜色知觉和空间知觉已发展起来</NoteLine>
                </NoteLines>
              </NoteSection>
              <NoteSection $gap={36}>
                <NoteLines>
                  <NoteLine>听觉：出生时，对所有的听觉刺激均有反应　大的噪音会损害听觉细胞，损伤听力</NoteLine>
                  <NoteLine>触觉：早期用嘴来探索世界，注重所接触物的清洁、大小、材质（不必阻拦）</NoteLine>
                  <NoteLine $indent>早期触摸与被触摸的经历影响婴儿的身体与情绪健康，触觉的敏锐性与动作技能的发展和对物质世界的理解</NoteLine>
                </NoteLines>
              </NoteSection>
            </NoteBody>
          </NoteBox>
        </Canvas>
      </Workspace>
    </Window>
  );
}
